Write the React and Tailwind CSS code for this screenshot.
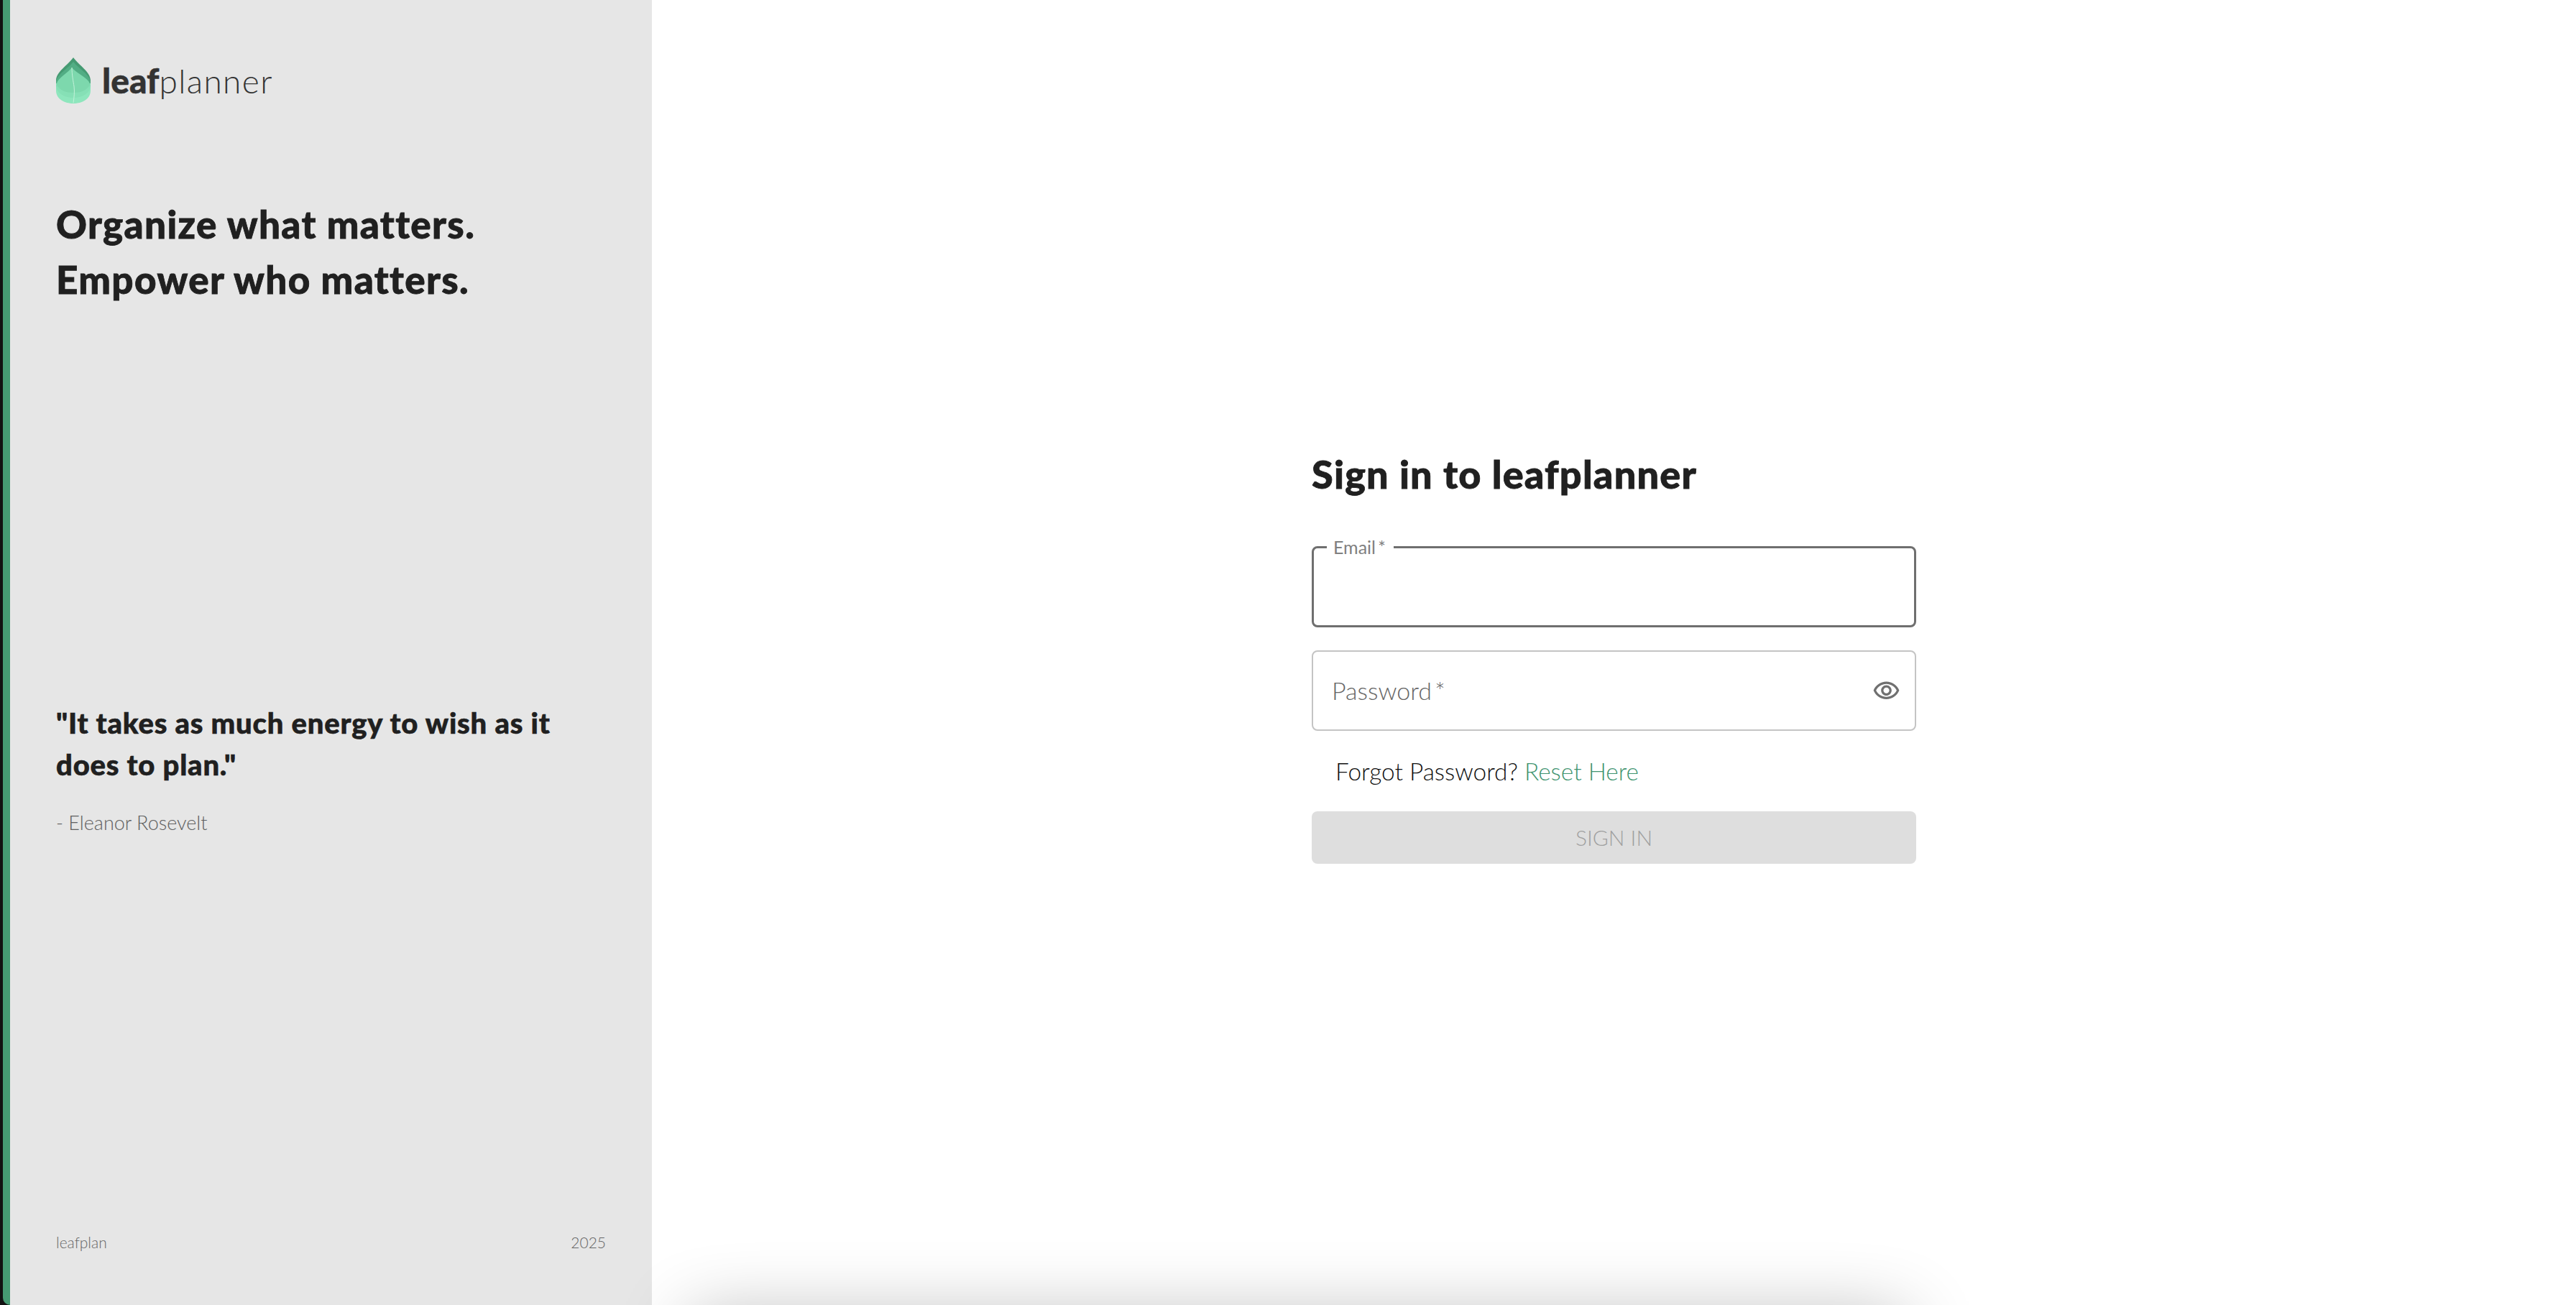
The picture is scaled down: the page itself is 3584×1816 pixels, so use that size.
import React from 'react';

const FONT = 'font-["Lato","Noto_Sans",sans-serif]';

const LeafLogo = () => (
  <svg width="48" height="64" viewBox="0 0 48 64" className="block">
    {/* back layers */}
    <path d="M24 0 C32 11 48 20 48 32 L48 44 L0 44 L0 32 C0 20 16 11 24 0 Z" fill="#459a72" />
    <path d="M24 6 C32 16 48 24 48 35 L48 46 L0 46 L0 35 C0 24 16 16 24 6 Z" fill="#52ad84" />
    {/* bottom lobes */}
    <path d="M0 40 L48 40 L48 46 C48 58 36 64 24 64 C12 64 0 58 0 46 Z" fill="#8ee6bd" />
    <path d="M0 36 L48 36 L48 38 C48 50 36 56 24 56 C12 56 0 50 0 38 Z" fill="#86e0b6" />
    {/* front */}
    <path d="M22 14 C28 22 48 30 47 38 C43 46 34 49 24 49 C14 49 5 46 1 38 C0 30 16 22 22 14 Z" fill="#7dd8ad" />
    {/* vein */}
    <path d="M22 14 C22 24 24 34 25 40 C26 48 25 56 24 63" fill="none" stroke="#c4f2da" strokeWidth="1" />
  </svg>
);

const VisibilityIcon = () => (
  <svg width="39" height="39" viewBox="0 0 24 24" fill="#707070" className="block">
    <path d="M12 6c3.79 0 7.17 2.13 8.82 5.5C19.17 14.87 15.79 17 12 17s-7.17-2.13-8.82-5.5C4.83 8.13 8.21 6 12 6m0-2C7 4 2.73 7.11 1 11.5 2.73 15.89 7 19 12 19s9.27-3.11 11-7.5C21.27 7.11 17 4 12 4zm0 5c1.38 0 2.5 1.12 2.5 2.5S13.38 14 12 14s-2.5-1.12-2.5-2.5S10.62 9 12 9m0-2c-2.48 0-4.5 2.02-4.5 4.5S9.52 16 12 16s4.5-2.02 4.5-4.5S14.48 7 12 7z" />
  </svg>
);

const SidePanel = () => (
  <aside className="flex w-[907px] shrink-0 bg-[#e6e6e6]">
    {/* Green edge, with the window's dark rim and rounded corner behind it */}
    <div className="w-[14px] shrink-0 bg-[#111111] pl-1">
      <div className="h-full rounded-bl-[16px] bg-[#459a72]"></div>
    </div>

    <div className="flex flex-col flex-1 pl-[64px] pr-[64px]">
      <div className="flex items-center gap-4 pt-[80px]">
        <LeafLogo />
        <div className="text-[46px] leading-none text-[#333333] tracking-[1.4px] font-light">
          <span className="text-[48px] font-black tracking-normal [-webkit-text-stroke:0.5px_#333333]">leaf</span>planner
        </div>
      </div>

      <h1 className="mt-[129px] text-[53px] leading-[77px] font-black tracking-[1.35px] text-[#202020] [-webkit-text-stroke:0.8px_#202020]">
        Organize what matters.
        <br />
        Empower who matters.
      </h1>

      <div className="mt-[550px]">
        <p className="text-[40px] leading-[58px] font-black tracking-[0.8px] text-[#202020] [-webkit-text-stroke:0.6px_#202020]">
          "It takes as much energy to wish as it does to plan."
        </p>
        <p className="mt-[35px] text-[27px] leading-[34px] font-light text-[#606060]">- Eleanor Rosevelt</p>
      </div>

      <div className="mt-auto mb-[72px] flex justify-between text-[21px] leading-[30px] font-light text-[#666666]">
        <span>leafplan</span>
        <span>2025</span>
      </div>
    </div>
  </aside>
);

const SignInForm = () => (
  <form className="w-[841px]">
    <h2 className="text-[54px] leading-[92px] font-black tracking-[1.2px] text-[#202020] [-webkit-text-stroke:0.8px_#202020]">
      Sign in to leafplanner
    </h2>

    {/* Email, focused */}
    <div className="relative mt-[54px] h-[113px] rounded-[8px] border-[3px] border-[#6f6f6f]">
      <span className="absolute left-[18px] -top-[14px] bg-white pl-[9px] pr-[11px] text-[25px] leading-[24px] text-[#808080]">
        Email{'\u2009'}*
      </span>
    </div>

    {/* Password */}
    <div className="mt-[32px] flex h-[112px] items-center justify-between rounded-[8px] border-2 border-[#c4c4c4] pl-[26px] pr-[20px]">
      <span className="-mt-[2px] text-[34px] font-light text-[#666666]">Password{'\u2009'}*</span>
      <VisibilityIcon />
    </div>

    <p className="mt-[32px] pl-[33px] text-[33.4px] leading-[48px] font-light text-[#111111]">
      Forgot Password? <span className="text-[#3f9470]">Reset Here</span>
    </p>

    <button
      type="button"
      disabled
      className="mt-[32px] block h-[73px] w-full rounded-[8px] bg-[#dedede] text-[30px] font-light text-[#a0a0a0]"
    >
      SIGN IN
    </button>
  </form>
);

const App = () => {
  return (
    <div className={`relative flex h-screen overflow-hidden bg-white ${FONT}`}>
      <SidePanel />
      <main className="flex flex-1 items-center justify-center">
        <SignInForm />
      </main>
      {/* Shadow of something sitting just below the fold */}
      <div className="absolute left-[960px] right-[934px] top-[1834px] h-[80px] shadow-[0_0_100px_rgba(0,0,0,0.3)]"></div>
    </div>
  );
};

export default App;
